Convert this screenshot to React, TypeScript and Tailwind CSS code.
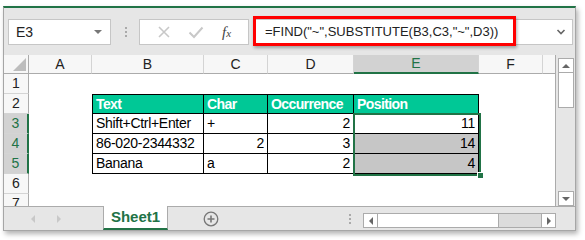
import React from 'react';

const cols = ['A', 'B', 'C', 'D', 'E', 'F', ''];
const font = { fontFamily: '"Liberation Sans", Arial, sans-serif' };

type Cell = { v: string; right?: boolean; head?: boolean; sel?: boolean };

const rows: Cell[][] = [
  [{ v: 'Text', head: true }, { v: 'Char', head: true }, { v: 'Occurrence', head: true }, { v: 'Position', head: true }],
  [{ v: 'Shift+Ctrl+Enter' }, { v: '+' }, { v: '2', right: true }, { v: '11', right: true }],
  [{ v: '86-020-2344332' }, { v: '2', right: true }, { v: '3', right: true }, { v: '14', right: true, sel: true }],
  [{ v: 'Banana' }, { v: 'a' }, { v: '2', right: true }, { v: '4', right: true, sel: true }],
];

const ColHeader = ({ label }: { label: string }) => {
  const active = label === 'E';
  return (
    <div
      className={`flex items-center justify-center text-[14px] border-r border-[#d4d4d4] ${
        active ? 'bg-[#d2d2d2] text-[#217346] border-b-2 border-b-[#217346]' : 'bg-[#f7f7f7] text-[#222] border-b border-b-[#ababab]'
      }`}
    >
      {label}
    </div>
  );
};

const RowHeader = ({ n }: { n: number }) => {
  const active = n >= 3 && n <= 5;
  return (
    <div
      className={`flex items-center justify-center text-[14px] border-b border-[#d4d4d4] ${
        active ? 'bg-[#d2d2d2] text-[#217346] border-r-2 border-r-[#217346]' : 'bg-[#f7f7f7] text-[#222] border-r border-r-[#ababab]'
      }`}
    >
      {n}
    </div>
  );
};

const App: React.FC = () => {
  return (
    <div className="w-[585px] h-[240px] bg-white pt-[6px] pl-[3px] overflow-hidden" style={font}>
      <div className="w-[573px] h-[225px] flex flex-col border border-[#a6a6a6] border-t-2 border-t-[#217346] bg-[#e6e6e6] shadow-[2px_3px_5px_rgba(0,0,0,0.3)] relative">
        {/* formula bar */}
        <div className="h-[47px] flex items-start pt-[11px] pl-[4px] relative">
          <div className="w-[103px] h-[26px] bg-white border border-[#c6c6c6] flex items-center justify-between pl-[7px] pr-[8px] text-[14px] text-[#222]">
            <span>E3</span>
            <span className="w-0 h-0 border-l-[4px] border-r-[4px] border-t-[4px] border-l-transparent border-r-transparent border-t-[#777]" />
          </div>
          <div className="w-[30px] h-[26px] flex flex-col items-center justify-center gap-[2px]">
            <span className="w-[2px] h-[2px] bg-[#aaa]" />
            <span className="w-[2px] h-[2px] bg-[#aaa]" />
            <span className="w-[2px] h-[2px] bg-[#aaa]" />
          </div>
          <div className="w-[110px] h-[26px] bg-white border border-[#c6c6c6] flex items-center justify-around px-[8px] ml-[-2px]">
            <svg width="14" height="14" viewBox="0 0 14 14">
              <path d="M2 2 L12 12 M12 2 L2 12" stroke="#c8c8c8" strokeWidth="1.6" />
            </svg>
            <svg width="16" height="14" viewBox="0 0 16 14">
              <path d="M1.5 7.5 L6 12 L14.5 2.5" stroke="#c8c8c8" strokeWidth="2" fill="none" />
            </svg>
            <span className="text-[15px] italic text-[#444]" style={{ fontFamily: '"Liberation Serif", serif' }}>
              f<span className="text-[11px]">x</span>
            </span>
          </div>
          <div className="ml-[4px] w-[320px] h-[26px] bg-white border border-[#c6c6c6] flex items-center justify-between pl-[11px] pr-[6px] text-[13px] text-[#222]">
            <span>=FIND("~",SUBSTITUTE(B3,C3,"~",D3))</span>
            <svg width="10" height="8" viewBox="0 0 10 8">
              <path d="M1.5 2 L5 5.5 L8.5 2" stroke="#666" strokeWidth="1.6" fill="none" />
            </svg>
          </div>
          <div className="absolute left-[249px] top-[8px] w-[263px] h-[30px] border-[3px] border-[#f00] shadow-[1px_2px_3px_rgba(0,0,0,0.3)]" />
        </div>

        {/* grid + vertical scrollbar */}
        <div className="h-[151px] flex">
          <div className="w-[552px] h-[151px] overflow-hidden bg-white border-r border-[#ababab] relative">
            <div className="grid grid-cols-[25px_63px_112px_64px_86px_125px_64px_13px] grid-rows-[19px_20px_20px_20px_20px_20px_20px_20px]">
              <div className="bg-[#f7f7f7] border-r border-b border-[#ababab] flex items-end justify-end p-[2px]">
                <svg width="13" height="13" viewBox="0 0 13 13">
                  <path d="M13 0 L13 13 L0 13 Z" fill="#bdbdbd" />
                </svg>
              </div>
              {cols.map((c, i) => (
                <ColHeader key={i} label={c} />
              ))}

              {[1, 2, 3, 4, 5, 6, 7].map((r) => {
                const data = r >= 2 && r <= 5 ? rows[r - 2] : null;
                return (
                  <React.Fragment key={r}>
                    <RowHeader n={r} />
                    <div />
                    {data
                      ? data.map((cell, ci) => (
                          <div
                            key={ci}
                            className={`flex items-center px-[3px] text-[14px] border-r border-b border-black whitespace-nowrap overflow-hidden ${
                              ci === 0 ? 'border-l' : ''
                            } ${r === 2 ? 'border-t' : ''} ${cell.right ? 'justify-end' : ''} ${
                              cell.head
                                ? 'bg-[#00c896] text-white font-bold tracking-[-0.6px]'
                                : cell.sel
                                ? 'bg-[#c6c6c6] text-black tracking-[-0.3px]'
                                : 'text-black tracking-[-0.3px]'
                            }`}
                          >
                            {cell.v}
                          </div>
                        ))
                      : [0, 1, 2, 3].map((k) => <div key={k} />)}
                    <div />
                    <div />
                  </React.Fragment>
                );
              })}
            </div>
            {/* selection E3:E5 */}
            <div className="absolute left-[349px] top-[58px] w-[128px] h-[63px] border-2 border-[#217346]">
              <span className="absolute right-[-5px] bottom-[-5px] w-[7px] h-[7px] bg-[#217346] border border-white" />
            </div>
          </div>
          <div className="w-[19px] h-[151px] flex flex-col items-center pt-[3px] bg-[#e6e6e6]">
            <div className="w-[16px] h-[15px] bg-white border border-[#ababab] flex items-center justify-center">
              <span className="w-0 h-0 border-l-[4px] border-r-[4px] border-b-[4px] border-l-transparent border-r-transparent border-b-[#666]" />
            </div>
            <div className="w-[16px] h-[35px] bg-white border border-[#ababab] border-t-0" />
            <div className="flex-1" />
            <div className="w-[16px] h-[15px] bg-white border border-[#ababab] flex items-center justify-center">
              <span className="w-0 h-0 border-l-[4px] border-r-[4px] border-t-[4px] border-l-transparent border-r-transparent border-t-[#666]" />
            </div>
          </div>
        </div>

        {/* tab bar */}
        <div className="h-[24px] flex items-stretch border-t border-[#ababab] bg-[#e6e6e6]">
          <div className="w-[99px] flex items-center gap-[22px] pl-[27px]">
            <span className="w-0 h-0 border-t-[4px] border-b-[4px] border-r-[4px] border-t-transparent border-b-transparent border-r-[#c8c8c8]" />
            <span className="w-0 h-0 border-t-[4px] border-b-[4px] border-l-[4px] border-t-transparent border-b-transparent border-l-[#c8c8c8]" />
          </div>
          <div className="w-[65px] mt-[-1px] bg-white border-l border-r border-[#ababab] border-b-2 border-b-[#217346] flex items-center justify-center text-[15px] font-bold text-[#217346]">
            Sheet1
          </div>
          <div className="w-[85px] flex items-center justify-center">
            <svg width="16" height="16" viewBox="0 0 16 16">
              <circle cx="8" cy="8" r="6.8" stroke="#777" strokeWidth="1.3" fill="none" />
              <path d="M8 4.5 V11.5 M4.5 8 H11.5" stroke="#777" strokeWidth="1.6" />
            </svg>
          </div>
          <div className="flex-1 flex items-center justify-end pr-[12px]">
            <div className="flex flex-col gap-[2px]">
              <span className="w-[2px] h-[2px] bg-[#aaa]" />
              <span className="w-[2px] h-[2px] bg-[#aaa]" />
              <span className="w-[2px] h-[2px] bg-[#aaa]" />
            </div>
          </div>
          <div className="w-[193px] h-[15px] mt-[6px] flex border border-[#ababab] bg-[#dcdcdc]">
            <div className="w-[14px] bg-white border-r border-[#ababab] flex items-center justify-center">
              <span className="w-0 h-0 border-t-[4px] border-b-[4px] border-r-[4px] border-t-transparent border-b-transparent border-r-[#666]" />
            </div>
            <div className="w-[121px] bg-white border-r border-[#ababab]" />
            <div className="flex-1" />
            <div className="w-[14px] bg-white border-l border-[#ababab] flex items-center justify-center">
              <span className="w-0 h-0 border-t-[4px] border-b-[4px] border-l-[4px] border-t-transparent border-b-transparent border-l-[#666]" />
            </div>
          </div>
          <div className="w-[19px]" />
        </div>
      </div>
    </div>
  );
};

export default App;
